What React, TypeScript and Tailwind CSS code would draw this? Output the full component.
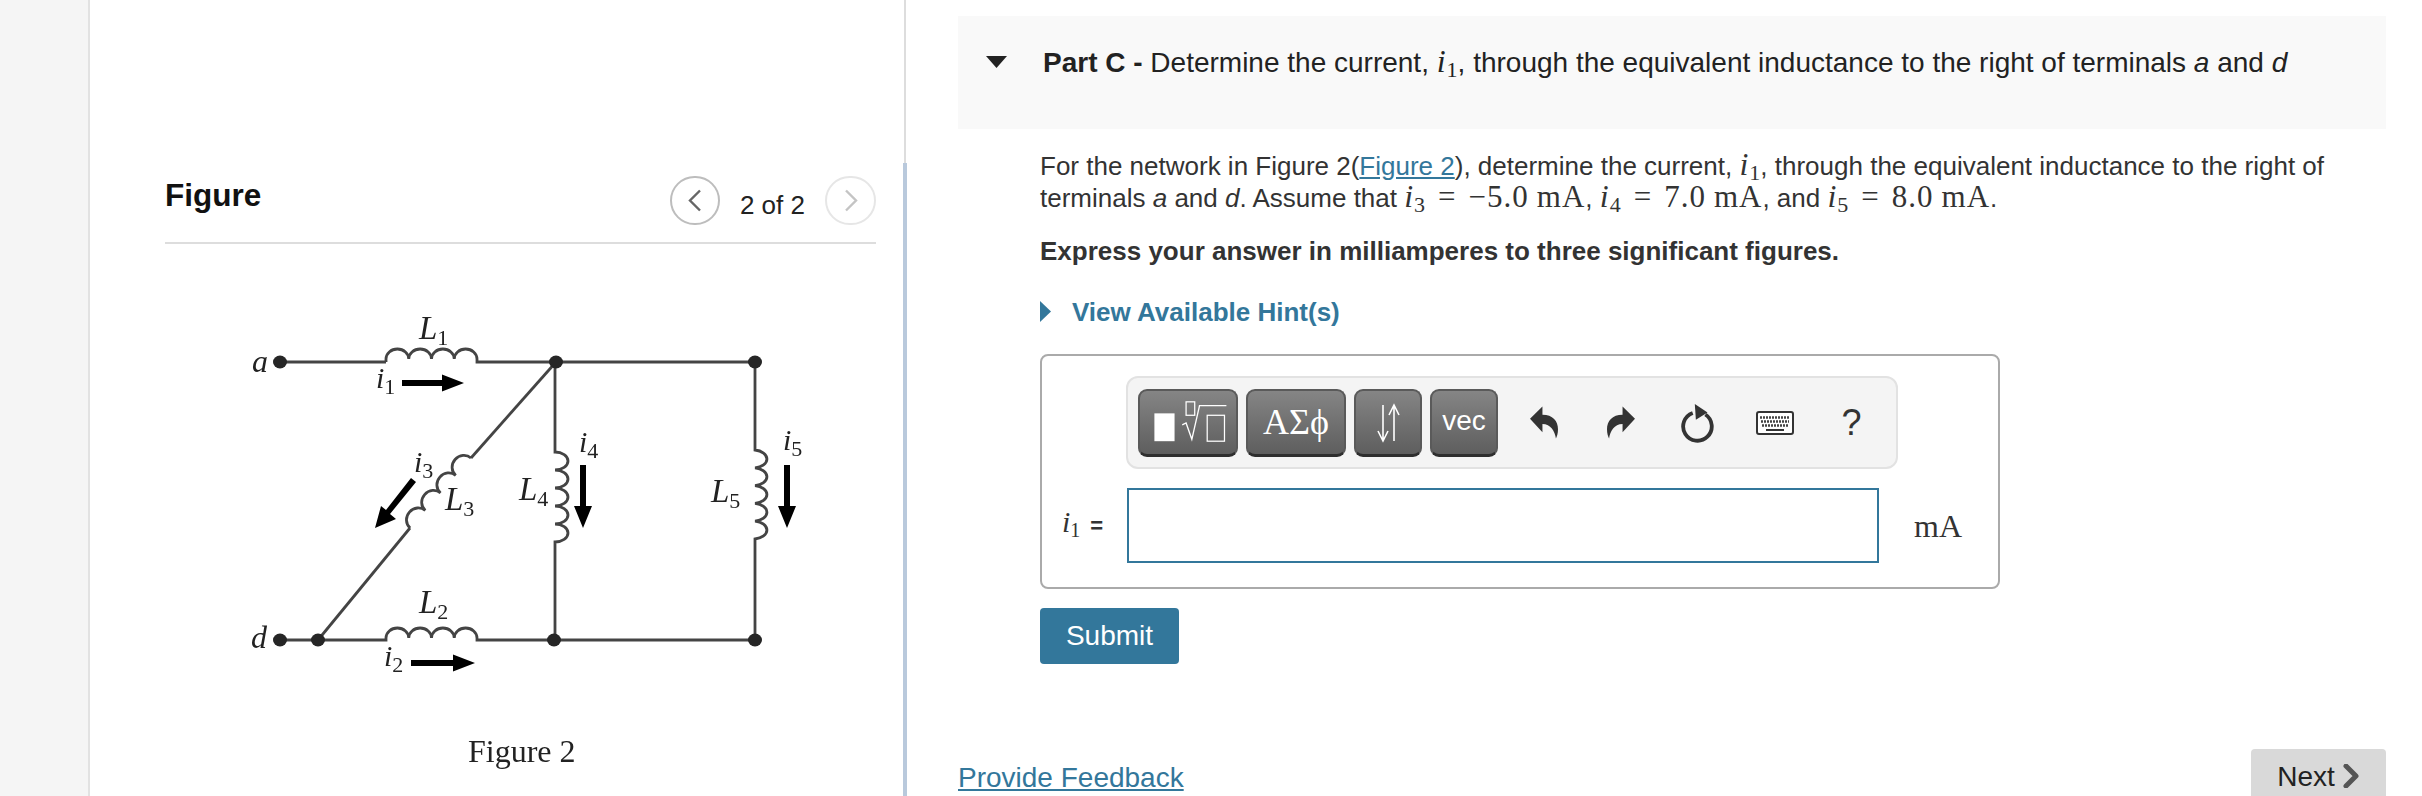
import React from "react";

const hump = (n: number, w: number, h: number, sweep = 1) => {
  let d = "";
  for (let i = 0; i < n; i++) d += ` a${w / 2} ${h} 0 0 ${sweep} ${w} 0`;
  return d;
};

function Wire({ d }: { d: string }) {
  return <path d={d} fill="none" stroke="#444" strokeWidth={2.8} />;
}

function Dot({ x, y }: { x: number; y: number }) {
  return <ellipse cx={x} cy={y} rx={7} ry={6.5} fill="#262626" />;
}

function Lab({ x, y, t, s, size = 33, sub = 22 }: { x: number; y: number; t: string; s?: string; size?: number; sub?: number }) {
  return (
    <text x={x} y={y} fontFamily="Liberation Serif, serif" fontStyle="italic" fontSize={size} fill="#222">
      {t}
      {s && (
        <tspan dy={6} fontSize={sub} fontStyle="normal">
          {s}
        </tspan>
      )}
    </text>
  );
}

function Circuit() {
  return (
    <svg viewBox="165 244 711 552" width={711} height={552} className="block blur-[0.4px]">
      <Wire d="M280 362 H386" />
      <Wire d={`M386 362 V359${hump(4, 22.75, 10)} V362 H755`} />
      <Wire d={`M280 640 H386 V638${hump(4, 22.75, 10)} V640 H755`} />
      <Wire d={`M555 362 V452 ${Array.from({ length: 5 }).map(() => "a13 9 0 0 1 0 18").join(" ")} V640`} />
      <Wire d={`M755 362 V450 ${Array.from({ length: 5 }).map(() => "a14 9 0 0 1 0 17.8").join(" ")} V640`} />
      <Wire d="M556 362 L471 458" />
      <Wire d="M410 528 L318 640" />
      <g transform="translate(471 458) rotate(131)">
        <Wire d={`M0 0${hump(4, 23.2, 11, 0)}`} />
      </g>
      <Dot x={280} y={362} />
      <Dot x={556} y={362} />
      <Dot x={755} y={362} />
      <Dot x={280} y={640} />
      <Dot x={318} y={640} />
      <Dot x={554} y={640} />
      <Dot x={755} y={640} />
      <path d="M402 380 H442 V374.500 L464 383 L442 391.500 V386 H402 Z" fill="#000" />
      <path d="M411 660 H453 V654.500 L475 663 L453 671.500 V666 H411 Z" fill="#000" />
      <path d="M580 465 H586 V506 H592 L583 528 L574 506 H580 Z" fill="#000" />
      <path d="M784 465 H790 V506 H796 L787 528 L778 506 H784 Z" fill="#000" />
      <path d="M411 478 L416 482 L390 514 L396 519 L375 528 L381 506 L386 510 Z" fill="#000" />
      <Lab x={252} y={372} t="a" size={32} />
      <Lab x={251} y={648} t="d" size={32} />
      <Lab x={419} y={339} t="L" s="1" />
      <Lab x={419} y={613} t="L" s="2" />
      <Lab x={445} y={510} t="L" s="3" />
      <Lab x={519} y={500} t="L" s="4" />
      <Lab x={711} y={502} t="L" s="5" />
      <Lab x={376} y={388} t="i" s="1" size={30} />
      <Lab x={384} y={666} t="i" s="2" size={30} />
      <Lab x={414} y={472} t="i" s="3" size={30} />
      <Lab x={579} y={452} t="i" s="4" size={30} />
      <Lab x={783} y={450} t="i" s="5" size={30} />
      <text x={468} y={762} fontFamily="Liberation Serif, serif" fontSize={32} fill="#222">
        Figure 2
      </text>
    </svg>
  );
}

function M({ n }: { n: string }) {
  return (
    <span className="font-['Liberation_Serif',serif] text-[32px] leading-[0]">
      <span className="italic">i</span>
      <span className="text-[22px] align-[-5px] ml-[1px]">{n}</span>
    </span>
  );
}

function Eq({ v }: { v: string }) {
  return (
    <span className="font-['Liberation_Serif',serif] text-[31px] leading-[0] tracking-[1px]">
      <span className="ml-[13px] mr-[12px]">=</span>
      {v}
      <span className="ml-[8px]">mA</span>
    </span>
  );
}

function Chevron({ color, flip }: { color: string; flip?: boolean }) {
  return (
    <svg width="16" height="23" viewBox="0 0 16 23">
      <path d={flip ? "M3 1.500 L13 11.500 L3 21.500" : "M13 1.500 L3 11.500 L13 21.500"} fill="none" stroke={color} strokeWidth="2.400" />
    </svg>
  );
}

const btn =
  "h-[68px] flex items-center justify-center rounded-[9px] border-2 border-[#5a5a5a] border-b-[3px] border-b-[#2e2e2e] bg-gradient-to-b from-[#858585] to-[#5e5e5e] text-white shrink-0";

function Toolbar() {
  return (
    <div className="ml-[84px] mt-[20px] w-[772px] h-[93px] rounded-[12px] border-2 border-[#e2e2e2] bg-[#f4f4f4] flex items-center pl-[10px]">
      <div className={`${btn} w-[100px] mr-[8px]`}>
        <svg width="100" height="68" viewBox="0 0 100 68">
          <rect x="15" y="25" width="21" height="29" fill="#fff" />
          <rect x="48" y="13" width="9" height="14" fill="none" stroke="#fff" strokeWidth="1.300" />
          <path d="M44 37 L48 35 L54 52 L62 17 H90" fill="none" stroke="#fff" strokeWidth="1.400" />
          <rect x="70" y="27" width="18" height="27" fill="none" stroke="#fff" strokeWidth="1.300" />
        </svg>
      </div>
      <div className={`${btn} w-[100px] mr-[8px] font-['Liberation_Serif',serif] text-[36px] leading-none`}>ΑΣϕ</div>
      <div className={`${btn} w-[68px] mr-[8px]`}>
        <svg width="40" height="50" viewBox="0 0 40 50">
          <path d="M15 8 V44 M10 34 L15 44 L20 34 M26 44 V8 M21 18 L26 8 L31 18" fill="none" stroke="#fff" strokeWidth="1.600" />
        </svg>
      </div>
      <div className={`${btn} w-[68px] mr-[7px] pb-[2px] text-[28px] font-['Liberation_Sans',sans-serif]`}>vec</div>
      <div className="w-[77px] flex justify-center">
        <svg width="28" height="33" viewBox="0 0 27 31">
          <path d="M0 12 L12 0 V8 C22 8 27 14 27 22 C27 26 26 29 25 31 C24 24 20 17 12 17 V25 Z" fill="#333" />
        </svg>
      </div>
      <div className="w-[77px] flex justify-center">
        <svg width="28" height="33" viewBox="0 0 27 31">
          <path d="M27 12 L15 0 V8 C5 8 0 14 0 22 C0 26 1 29 2 31 C3 24 7 17 15 17 V25 Z" fill="#333" />
        </svg>
      </div>
      <div className="w-[77px] flex justify-center">
        <svg width="36" height="40" viewBox="0 0 34 36">
          <path d="M12 8.500 A13.500 13.500 0 1 0 24 10" fill="none" stroke="#333" strokeWidth="3.600" />
          <path d="M14 0 L26 8 L15 15 Z" fill="#333" />
        </svg>
      </div>
      <div className="w-[77px] flex justify-center">
        <svg width="38" height="24" viewBox="0 0 38 24">
          <rect x="1" y="1" width="36" height="22" rx="2" fill="#fff" stroke="#333" strokeWidth="2" />
          <path d="M4 6.500 H34 M5 10.500 H33 M6 14.500 H32" stroke="#444" strokeWidth="2.400" strokeDasharray="2 1" fill="none" />
          <path d="M10 19 H28" stroke="#333" strokeWidth="2" />
        </svg>
      </div>
      <div className="w-[77px] text-center text-[36px] leading-none text-[#333]">?</div>
    </div>
  );
}

export default function App() {
  return (
    <div className="w-[2422px] h-[796px] overflow-hidden flex bg-white font-['Liberation_Sans',sans-serif] text-[28px] leading-[32px] text-[#333]">
      <div className="w-[90px] shrink-0 bg-[#f5f5f5] border-r-2 border-[#e2e2e2]" />

      <div className="w-[812px] shrink-0 pl-[75px] pr-[26px]">
        <div className="mt-[176px] pb-[17px] h-[68px] border-b-2 border-[#dddddd] flex justify-between">
          <div className="mt-[1px] text-[31.500px] leading-[36px] font-bold text-[#111]">Figure</div>
          <div className="flex">
            <div className="w-[50px] h-[49px] rounded-full border-2 border-[#bdbdbd] flex items-center justify-center">
              <Chevron color="#666" />
            </div>
            <div className="mx-[20px] mt-[14px] text-[26px] leading-[30px] text-[#222]">2 of 2</div>
            <div className="w-[51px] h-[49px] rounded-full border-2 border-[#e6e6e6] flex items-center justify-center">
              <Chevron color="#c4c4c4" flip />
            </div>
          </div>
        </div>
        <Circuit />
      </div>

      <div className="w-[5px] shrink-0 flex flex-col items-center">
        <div className="h-[163px] w-[2px] bg-[#dddddd]" />
        <div className="flex-1 w-[4px] bg-[#b9c9dc]" />
      </div>

      <div className="flex-1 min-w-0 pl-[51px] pr-[36px]">
        <div className="mt-[16px] h-[113px] bg-[#f9f9f9] flex items-start pl-[28px] pt-[31px]">
          <svg width="21" height="12" viewBox="0 0 21 12" className="mt-[9px] mr-[36px] shrink-0">
            <path d="M0 0 H21 L10.500 12 Z" fill="#222" />
          </svg>
          <div className="text-[#222]">
            <b>Part C -</b> Determine the current, <M n="1" />, through the equivalent inductance to the right of terminals <i>a</i> and <i>d</i>
          </div>
        </div>

        <div className="pl-[82px] text-[26px]">
          <p className="mt-[21px] w-[1320px]">
            For the network in Figure 2(<span className="text-[#33779b] underline">Figure 2</span>), determine the current, <M n="1" />, through the equivalent inductance to the right of terminals <i>a</i> and <i>d</i>. Assume that <M n="3" /><Eq v="−5.0" />, <M n="4" /><Eq v="7.0" />, and <M n="5" /><Eq v="8.0" />.
          </p>
          <p className="mt-[21px] font-bold">Express your answer in milliamperes to three significant figures.</p>
          <div className="mt-[29px] flex items-center font-bold text-[#33779b]">
            <svg width="11" height="21" viewBox="0 0 11 21" className="mr-[21px] -mt-[2px]">
              <path d="M0 0 L11 10.500 L0 21 Z" fill="#33779b" />
            </svg>
            View Available Hint(s)
          </div>

          <div className="mt-[26px] w-[960px] h-[235px] rounded-[8px] border-2 border-[#aaaaaa]">
            <Toolbar />
            <div className="mt-[19px] flex items-center">
              <div className="w-[85px] pl-[20px] flex items-center text-[24px] whitespace-nowrap">
                <span className="font-['Liberation_Serif',serif] text-[30px]">
                  <span className="italic">i</span>
                  <span className="text-[20px] align-[-5px]">1</span>
                </span>
                <span className="ml-[10px] font-bold text-[22px]">=</span>
              </div>
              <div className="w-[752px] h-[75px] border-2 border-[#33779b]" />
              <div className="ml-[35px] font-['Liberation_Serif',serif] text-[32px]">mA</div>
            </div>
          </div>

          <div className="mt-[19px] w-[139px] h-[56px] rounded-[4px] bg-[#33779b] text-white text-[28px] flex items-center justify-center">Submit</div>
        </div>

        <div className="mt-[85px] flex justify-between items-start">
          <div className="mt-[13px] text-[#33779b] underline">Provide Feedback</div>
          <div className="w-[135px] h-[60px] rounded-[4px] bg-[#d9d9d9] flex items-start justify-center pt-[12px] text-[#222]">
            Next
            <svg width="18" height="24" viewBox="0 0 18 24" className="ml-[7px] mt-[3px]">
              <path d="M4 2 L14 12 L4 22" fill="none" stroke="#555" strokeWidth="5" strokeLinejoin="round" strokeLinecap="round" />
            </svg>
          </div>
        </div>
      </div>
    </div>
  );
}
